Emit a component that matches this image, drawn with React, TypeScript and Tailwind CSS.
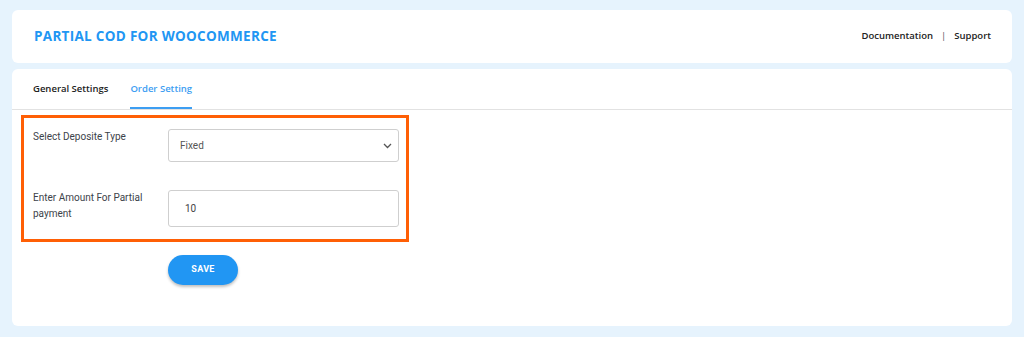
import React from "react";

export default function App() {
  return (
    <div className="min-h-[337px] w-full bg-[#e6f3fd] px-3 pt-[10px] pb-[11px]" style={{ fontFamily: "Roboto, 'Noto Sans', sans-serif" }}>
      <div className="flex h-[53px] items-center justify-between rounded-md bg-white pl-[22px] pr-[21px]">
        <div className="text-[13.5px] font-bold tracking-[0.3px] text-[#2196f3]" style={{ fontFamily: "'Open Sans', sans-serif" }}>
          PARTIAL COD FOR WOOCOMMERCE
        </div>
        <div className="flex items-center text-[9.5px] font-semibold text-[#222]" style={{ fontFamily: "'Open Sans', sans-serif" }}>
          <span>Documentation</span>
          <span className="mx-[8px] font-normal text-[#555]">|</span>
          <span>Support</span>
        </div>
      </div>

      <div className="mt-[6px] h-[257px] rounded-md bg-white">
        <div className="flex h-[41px] items-stretch gap-[22px] border-b border-[#e2e2e2] pl-[21px]" style={{ fontFamily: "'Open Sans', sans-serif" }}>
          <div className="flex items-center text-[9.5px] font-semibold text-[#222]">General Settings</div>
          <div className="flex items-center border-b-2 border-[#3d9ef2] pt-[2px] text-[9.5px] font-semibold text-[#3d9ef2]">Order Setting</div>
        </div>

        <div className="ml-[9px] mt-[5px] w-[388px] border-[3px] border-[#ff5f05] pb-[12px] pl-[9px] pr-[7px] pt-[11px]">
          <div className="grid grid-cols-[135px_1fr] items-start">
            <div className="text-[10px] leading-[16px] text-[#3c434a]">Select Deposite Type</div>
            <div className="relative flex h-[33px] items-center rounded-[3px] border border-[#cfcfcf] bg-white pl-[11px] text-[10px] text-[#555]">
              Fixed
              <svg className="absolute right-[6px] top-[13px]" width="9" height="6" viewBox="0 0 9 6" fill="none">
                <path d="M1 1l3.5 3.5L8 1" stroke="#555" strokeWidth="1.3" />
              </svg>
            </div>
          </div>
          <div className="mt-[28px] grid grid-cols-[135px_1fr] items-start">
            <div className="text-[10px] leading-[16px] text-[#3c434a]">Enter Amount For Partial<br />payment</div>
            <div className="flex h-[37px] items-center rounded-[3px] border border-[#cfcfcf] bg-white pl-[16px] text-[10px] text-[#444]">
              10
            </div>
          </div>
        </div>

        <div className="ml-[156px] mt-[13px]">
          <button className="h-[30px] w-[70px] rounded-full bg-[#2196f3] text-[9px] font-bold tracking-[0.3px] text-white shadow-[0_2px_3px_rgba(0,0,0,0.25)]">
            SAVE
          </button>
        </div>
      </div>
    </div>
  );
}
